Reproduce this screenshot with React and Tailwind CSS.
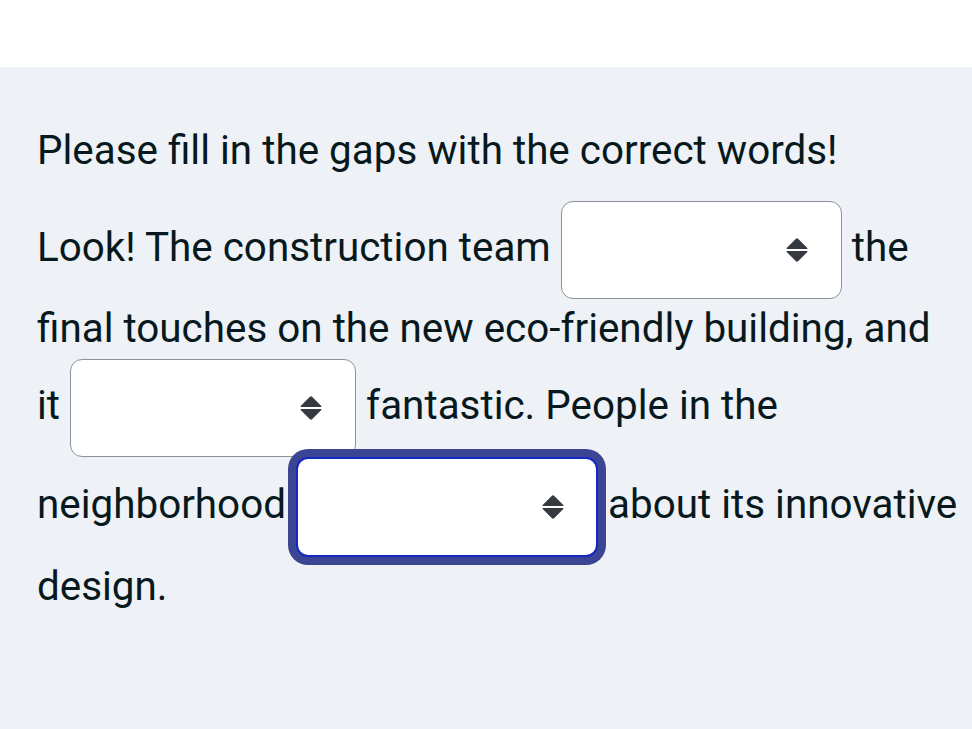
import React from 'react';

function SortIcon() {
    return (
        <svg width="22" height="24" viewBox="0 0 22 24" className="shrink-0">
            <path d="M9.7 1.1a1.7 1.7 0 0 1 2.6 0l9 8.9c.5.5.2 1-.5 1H1.2c-.7 0-1-.5-.5-1z" fill="#343a40" />
            <path d="M9.7 22.9a1.7 1.7 0 0 0 2.6 0l9-8.9c.5-.5.2-1-.5-1H1.2c-.7 0-1 .5-.5 1z" fill="#343a40" />
        </svg>
    );
}

function Gap({ width, focused }) {
    return (
        <span
            className={
                focused
                    ? `inline-flex ${width} h-[100px] align-middle items-center justify-end pr-[32px] bg-white rounded-[12px] border-2 border-[#1227c4] ring-8 ring-[#3c4593]`
                    : `inline-flex ${width} h-[98px] align-middle items-center justify-end pr-[33px] bg-white rounded-[12px] border border-[#8d9199]`
            }
        >
            <SortIcon />
        </span>
    );
}

export default function App() {
    return (
        <div className="min-h-screen bg-[#eef1f6] font-['Roboto',sans-serif] text-[#08191d]">
            <div className="h-[67px] bg-white" />
            <div className="pl-[37px] pr-[12px] pt-[54px] pb-[80px]">
                <p className="text-[40.4px] leading-[60px] mb-[20px]">Please fill in the gaps with the correct words!</p>
                <p className="text-[40.4px] leading-[60px]">
                    Look! The construction team <Gap width="w-[281px]" /> the final touches on the new eco-friendly building, and it{' '}
                    <Gap width="w-[286px]" /> fantastic. People in the neighborhood <Gap width="w-[302px]" focused /> about its innovative design.
                </p>
            </div>
        </div>
    );
}
